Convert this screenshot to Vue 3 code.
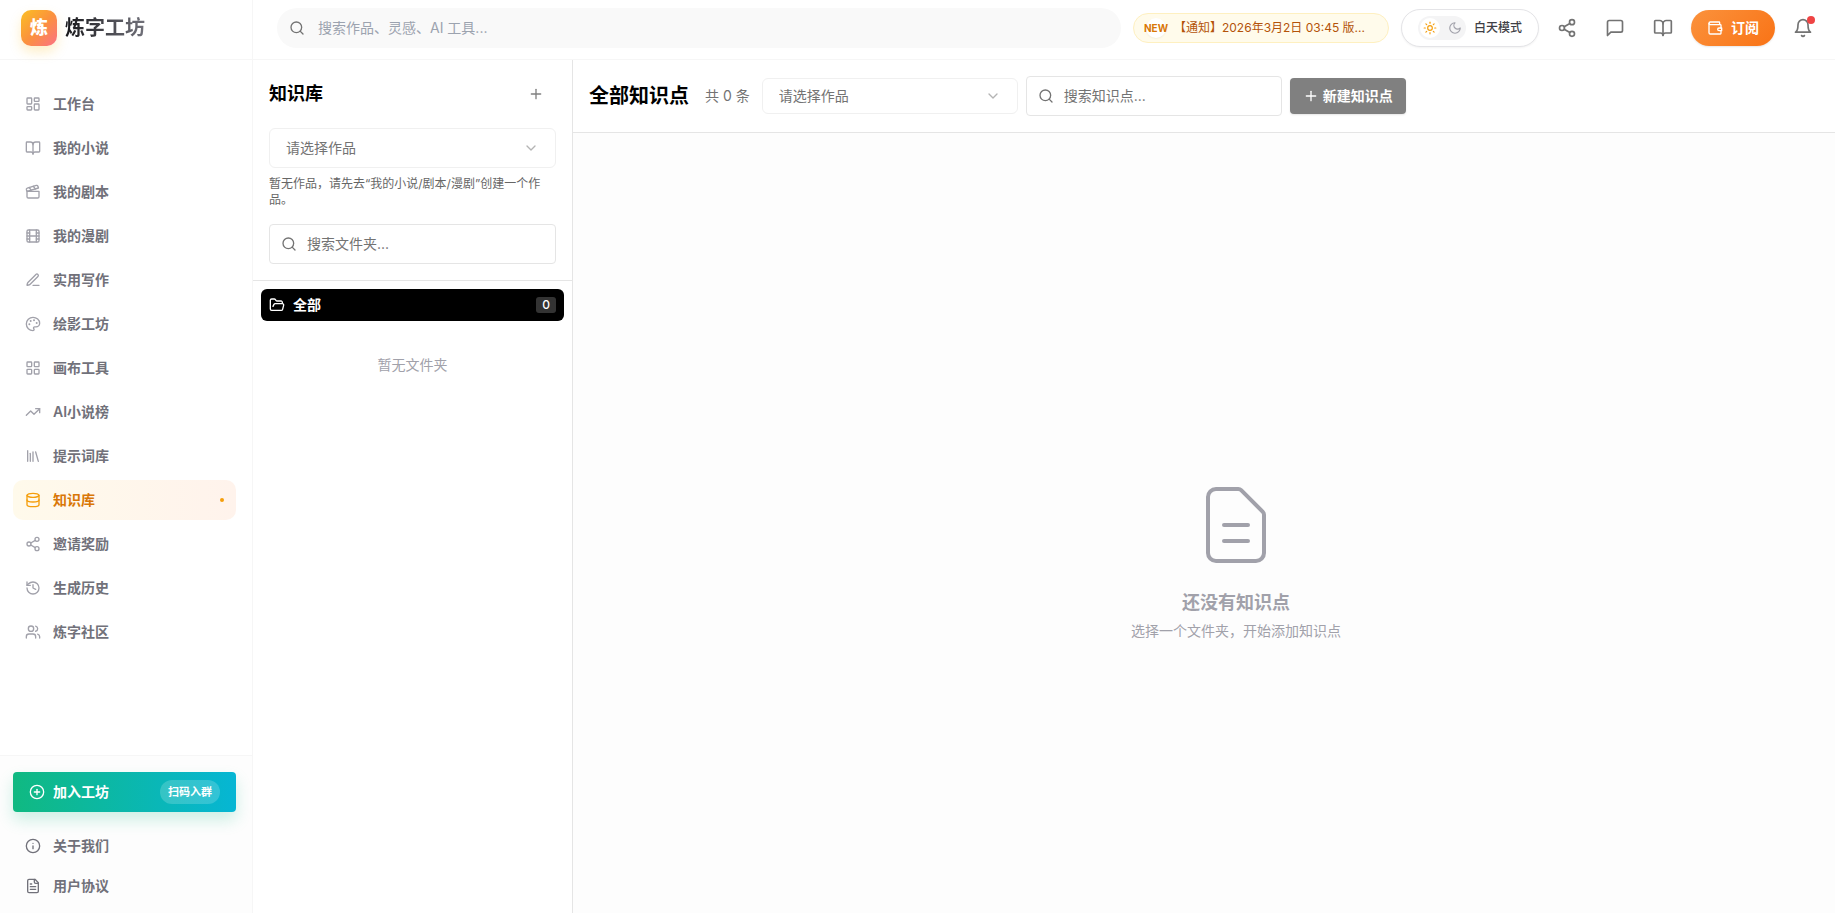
<template>
  <div class="layout">
    <aside class="sidebar">
      <a href="#" class="brand">
        <span class="brand-mark">炼</span>
        <span class="brand-name">炼字工坊</span>
      </a>
      <nav class="nav">
        <a
          v-for="item in navItems"
          :key="item.label"
          href="#"
          class="nav-item"
          :class="{ active: item.label === current }"
          @click.prevent="current = item.label"
        >
          <svg class="icon" viewBox="0 0 24 24" aria-hidden="true">
            <path v-for="d in icons[item.icon]" :key="d" :d="d" />
          </svg>
          <span>{{ item.label }}</span>
          <i v-if="item.label === current" class="nav-dot"></i>
        </a>
      </nav>
      <div class="sidebar-footer">
        <button type="button" class="join">
          <svg class="icon" viewBox="0 0 24 24" aria-hidden="true">
            <path v-for="d in icons.plusCircle" :key="d" :d="d" />
          </svg>
          <span>加入工坊</span>
          <span class="join-tag">扫码入群</span>
        </button>
        <a v-for="item in footerItems" :key="item.label" href="#" class="footer-item">
          <svg class="icon" viewBox="0 0 24 24" aria-hidden="true">
            <path v-for="d in icons[item.icon]" :key="d" :d="d" />
          </svg>
          <span>{{ item.label }}</span>
        </a>
      </div>
    </aside>

    <div class="page">
      <header class="topbar">
        <label class="global-search">
          <svg class="icon" viewBox="0 0 24 24" aria-hidden="true">
            <path v-for="d in icons.search" :key="d" :d="d" />
          </svg>
          <input v-model="keyword" type="text" placeholder="搜索作品、灵感、AI 工具..." aria-label="搜索" />
        </label>
        <a href="#" class="notice">
          <span class="notice-tag">NEW</span>
          <span class="notice-text">【通知】2026年3月2日 03:45 版...</span>
        </a>
        <button type="button" class="theme">
          <span class="theme-track">
            <span class="theme-knob">
              <svg class="icon small" viewBox="0 0 24 24" aria-hidden="true">
                <path v-for="d in icons.sun" :key="d" :d="d" />
              </svg>
            </span>
            <svg class="icon small moon" viewBox="0 0 24 24" aria-hidden="true">
              <path v-for="d in icons.moon" :key="d" :d="d" />
            </svg>
          </span>
          <span>白天模式</span>
        </button>
        <button
          v-for="action in actions"
          :key="action.icon"
          type="button"
          class="icon-button"
          :aria-label="action.label"
        >
          <svg class="icon large" viewBox="0 0 24 24" aria-hidden="true">
            <path v-for="d in icons[action.icon]" :key="d" :d="d" />
          </svg>
        </button>
        <button type="button" class="subscribe">
          <svg class="icon" viewBox="0 0 24 24" aria-hidden="true">
            <path v-for="d in icons.wallet" :key="d" :d="d" />
          </svg>
          <span>订阅</span>
        </button>
        <button type="button" class="icon-button" aria-label="消息">
          <svg class="icon large" viewBox="0 0 24 24" aria-hidden="true">
            <path v-for="d in icons.bell" :key="d" :d="d" />
          </svg>
          <i class="unread"></i>
        </button>
      </header>

      <div class="content">
        <section class="folders">
          <div class="folders-head">
            <div class="folders-title">
              <h2>知识库</h2>
              <button type="button" class="add" aria-label="新建文件夹">
                <svg class="icon" viewBox="0 0 24 24" aria-hidden="true">
                  <path v-for="d in icons.plus" :key="d" :d="d" />
                </svg>
              </button>
            </div>
            <div class="select">
              <select disabled aria-label="作品">
                <option>请选择作品</option>
              </select>
              <svg class="icon" viewBox="0 0 24 24" aria-hidden="true">
                <path v-for="d in icons.chevron" :key="d" :d="d" />
              </svg>
            </div>
            <p class="hint">暂无作品，请先去“我的小说/剧本/漫剧”创建一个作品。</p>
            <label class="search">
              <svg class="icon" viewBox="0 0 24 24" aria-hidden="true">
                <path v-for="d in icons.search" :key="d" :d="d" />
              </svg>
              <input v-model="folderKeyword" type="text" placeholder="搜索文件夹..." aria-label="搜索文件夹" />
            </label>
          </div>
          <div class="folders-list">
            <button type="button" class="folder">
              <svg class="icon" viewBox="0 0 24 24" aria-hidden="true">
                <path v-for="d in icons.folder" :key="d" :d="d" />
              </svg>
              <span>全部</span>
              <span class="folder-count">{{ total }}</span>
            </button>
            <p class="folders-empty">暂无文件夹</p>
          </div>
        </section>

        <main class="points">
          <div class="points-head">
            <h1>全部知识点</h1>
            <span class="points-total">共 {{ total }} 条</span>
            <div class="select compact">
              <select disabled aria-label="筛选作品">
                <option>请选择作品</option>
              </select>
              <svg class="icon" viewBox="0 0 24 24" aria-hidden="true">
                <path v-for="d in icons.chevron" :key="d" :d="d" />
              </svg>
            </div>
            <label class="search wide">
              <svg class="icon" viewBox="0 0 24 24" aria-hidden="true">
                <path v-for="d in icons.search" :key="d" :d="d" />
              </svg>
              <input v-model="pointKeyword" type="text" placeholder="搜索知识点..." aria-label="搜索知识点" />
            </label>
            <button type="button" class="create" disabled>
              <svg class="icon" viewBox="0 0 24 24" aria-hidden="true">
                <path v-for="d in icons.plus" :key="d" :d="d" />
              </svg>
              <span>新建知识点</span>
            </button>
          </div>
          <div class="empty">
            <svg class="empty-icon" viewBox="0 0 24 24" aria-hidden="true">
              <path v-for="d in icons.document" :key="d" :d="d" />
            </svg>
            <h3>还没有知识点</h3>
            <p>选择一个文件夹，开始添加知识点</p>
          </div>
        </main>
      </div>
    </div>
  </div>
</template>

<script setup>
import { ref } from "vue";

const current = ref("知识库");
const keyword = ref("");
const folderKeyword = ref("");
const pointKeyword = ref("");
const total = ref(0);

const navItems = [
  { label: "工作台", icon: "dashboard" },
  { label: "我的小说", icon: "book" },
  { label: "我的剧本", icon: "clapper" },
  { label: "我的漫剧", icon: "film" },
  { label: "实用写作", icon: "pen" },
  { label: "绘影工坊", icon: "palette" },
  { label: "画布工具", icon: "grid" },
  { label: "AI小说榜", icon: "trending" },
  { label: "提示词库", icon: "library" },
  { label: "知识库", icon: "database" },
  { label: "邀请奖励", icon: "share" },
  { label: "生成历史", icon: "history" },
  { label: "炼字社区", icon: "users" },
];

const footerItems = [
  { label: "关于我们", icon: "info" },
  { label: "用户协议", icon: "file" },
];

const actions = [
  { label: "分享", icon: "share" },
  { label: "反馈", icon: "message" },
  { label: "教程", icon: "book" },
];

const circle = (cx, cy, r) => `M${cx - r} ${cy}a${r} ${r} 0 1 0 ${r * 2} 0a${r} ${r} 0 1 0 ${-r * 2} 0`;

const rect = (x, y, w, h, r) =>
  `M${x + r} ${y}h${w - 2 * r}a${r} ${r} 0 0 1 ${r} ${r}v${h - 2 * r}a${r} ${r} 0 0 1 ${-r} ${r}h${2 * r - w}a${r} ${r} 0 0 1 ${-r} ${-r}v${2 * r - h}a${r} ${r} 0 0 1 ${r} ${-r}z`;

const icons = {
  dashboard: [rect(3, 3, 7, 9, 1), rect(14, 3, 7, 5, 1), rect(14, 12, 7, 9, 1), rect(3, 16, 7, 5, 1)],
  book: [
    "M12 7v14",
    "M3 18a1 1 0 0 1-1-1V4a1 1 0 0 1 1-1h5a4 4 0 0 1 4 4 4 4 0 0 1 4-4h5a1 1 0 0 1 1 1v13a1 1 0 0 1-1 1h-6a3 3 0 0 0-3 3 3 3 0 0 0-3-3z",
  ],
  clapper: [
    "M20.2 6 3 11l-.9-2.4c-.3-1.1.3-2.2 1.3-2.5l13.5-4c1.1-.3 2.2.3 2.5 1.3Z",
    "m6.2 5.3 3.1 3.9",
    "m12.4 3.4 3.1 4",
    "M3 11h18v8a2 2 0 0 1-2 2H5a2 2 0 0 1-2-2Z",
  ],
  film: [rect(3, 3, 18, 18, 2), "M7 3v18", "M3 7.5h4", "M3 12h18", "M3 16.5h4", "M17 3v18", "M17 7.5h4", "M17 16.5h4"],
  pen: ["M12 20h9", "M16.376 3.622a1 1 0 0 1 3.002 3.002L7.368 18.635a2 2 0 0 1-.855.506l-2.872.838a.5.5 0 0 1-.62-.62l.838-2.872a2 2 0 0 1 .506-.854z"],
  palette: [
    "M12 2C6.5 2 2 6.5 2 12s4.5 10 10 10c.926 0 1.648-.746 1.648-1.688 0-.437-.18-.835-.437-1.125-.29-.289-.438-.652-.438-1.125a1.64 1.64 0 0 1 1.668-1.668h1.996c3.051 0 5.555-2.503 5.555-5.554C21.965 6.012 17.461 2 12 2z",
    circle(13.5, 6.5, 0.5),
    circle(17.5, 10.5, 0.5),
    circle(8.5, 7.5, 0.5),
    circle(6.5, 12.5, 0.5),
  ],
  grid: [rect(3, 3, 7, 7, 1), rect(14, 3, 7, 7, 1), rect(14, 14, 7, 7, 1), rect(3, 14, 7, 7, 1)],
  trending: ["m22 7-8.5 8.5-5-5L2 17", "M16 7h6v6"],
  library: ["m16 6 4 14", "M12 6v14", "M8 8v12", "M4 4v16"],
  database: ["M3 5a9 3 0 1 0 18 0a9 3 0 1 0-18 0", "M3 5v14a9 3 0 0 0 18 0V5", "M3 12a9 3 0 0 0 18 0"],
  share: [circle(18, 5, 3), circle(6, 12, 3), circle(18, 19, 3), "m8.59 13.51 6.83 3.98", "m15.41 6.51-6.82 3.98"],
  history: ["M3 12a9 9 0 1 0 9-9 9.75 9.75 0 0 0-6.74 2.74L3 8", "M3 3v5h5", "M12 7v5l4 2"],
  users: ["M16 21v-2a4 4 0 0 0-4-4H6a4 4 0 0 0-4 4v2", circle(9, 7, 4), "M22 21v-2a4 4 0 0 0-3-3.87", "M16 3.13a4 4 0 0 1 0 7.75"],
  plusCircle: [circle(12, 12, 10), "M8 12h8", "M12 8v8"],
  info: [circle(12, 12, 10), "M12 16v-4", "M12 8h.01"],
  file: ["M15 2H6a2 2 0 0 0-2 2v16a2 2 0 0 0 2 2h12a2 2 0 0 0 2-2V7Z", "M14 2v4a2 2 0 0 0 2 2h4", "M10 9H8", "M16 13H8", "M16 17H8"],
  search: [circle(11, 11, 8), "m21 21-4.3-4.3"],
  sun: [
    circle(12, 12, 4),
    "M12 2v2",
    "M12 20v2",
    "m4.93 4.93 1.41 1.41",
    "m17.66 17.66 1.41 1.41",
    "M2 12h2",
    "M20 12h2",
    "m6.34 17.66-1.41 1.41",
    "m19.07 4.93-1.41 1.41",
  ],
  moon: ["M12 3a6 6 0 0 0 9 9 9 9 0 1 1-9-9Z"],
  message: ["M21 15a2 2 0 0 1-2 2H7l-4 4V5a2 2 0 0 1 2-2h14a2 2 0 0 1 2 2z"],
  wallet: [
    "M19 7V4a1 1 0 0 0-1-1H5a2 2 0 0 0 0 4h15a1 1 0 0 1 1 1v4",
    "M3 5v14a2 2 0 0 0 2 2h15a1 1 0 0 0 1-1v-4",
    "M22 12h-4a2 2 0 0 0 0 4h4z",
  ],
  bell: ["M6 8a6 6 0 0 1 12 0c0 7 3 9 3 9H3s3-2 3-9", "M10.3 21a1.94 1.94 0 0 0 3.4 0"],
  plus: ["M5 12h14", "M12 5v14"],
  chevron: ["m6 9 6 6 6-6"],
  folder: ["m6 14 1.5-2.9A2 2 0 0 1 9.24 10H20a2 2 0 0 1 1.94 2.5l-1.54 6a2 2 0 0 1-1.95 1.5H4a2 2 0 0 1-2-2V5a2 2 0 0 1 2-2h3.9a2 2 0 0 1 1.69.9l.81 1.2a2 2 0 0 0 1.67.9H18a2 2 0 0 1 2 2v2"],
  document: ["M9 12h6m-6 4h6m2 5H7a2 2 0 0 1-2-2V5a2 2 0 0 1 2-2h5.586a1 1 0 0 1 .707.293l5.414 5.414a1 1 0 0 1 .293.707V19a2 2 0 0 1-2 2z"],
};
</script>

<style>
body {
  background: #fff;
}
</style>

<style scoped>
.layout {
  display: flex;
  min-height: 100vh;
  font-family: Inter, "Noto Sans CJK SC", sans-serif;
  font-size: 14px;
  line-height: 20px;
  color: #000;
}

.layout *,
.layout *::before {
  box-sizing: border-box;
}

h1,
h2,
h3,
p {
  margin: 0;
}

a {
  color: inherit;
  text-decoration: none;
}

button,
input,
select {
  margin: 0;
  padding: 0;
  border: 0;
  background: none;
  font: inherit;
  color: inherit;
}

button {
  cursor: pointer;
}

input {
  flex: 1;
  min-width: 0;
  outline: none;
}

input::placeholder {
  color: #737373;
  opacity: 1;
}

.icon {
  flex: none;
  width: 16px;
  height: 16px;
  fill: none;
  stroke: currentColor;
  stroke-width: 2;
  stroke-linecap: round;
  stroke-linejoin: round;
}

.icon.small {
  width: 14px;
  height: 14px;
}

.icon.large {
  width: 20px;
  height: 20px;
}

/* sidebar */
.sidebar {
  display: flex;
  flex: none;
  flex-direction: column;
  width: 253px;
  border-right: 1px solid #f6f6f6;
}

.brand {
  display: flex;
  align-items: center;
  gap: 8px;
  height: 60px;
  padding: 0 21px 4px;
  border-bottom: 1px solid #f6f6f6;
}

.brand-mark {
  display: flex;
  align-items: center;
  justify-content: center;
  width: 36px;
  height: 36px;
  border-radius: 10px;
  background: linear-gradient(135deg, #fbbf24, #fb923c 50%, #fb7185);
  box-shadow: 0 6px 12px rgba(251, 191, 36, 0.25);
  color: #fff;
  font-size: 18px;
  font-weight: 900;
}

.brand-name {
  background: linear-gradient(90deg, #18181b, #71717a);
  background-clip: text;
  color: transparent;
  font-size: 20px;
  font-weight: 700;
  line-height: 28px;
}

.nav {
  display: flex;
  flex: 1;
  flex-direction: column;
  gap: 4px;
  padding: 24px 16px 24px 13px;
}

.nav-item,
.footer-item {
  display: flex;
  align-items: center;
  gap: 12px;
  height: 40px;
  padding: 0 12px;
  border-radius: 10px;
  color: #71717a;
  font-weight: 600;
}

.nav-item .icon {
  color: #a1a1aa;
}

.nav-item.active {
  background: linear-gradient(90deg, #fffaeb, #fff3ec);
  color: #d97706;
  font-weight: 700;
}

.nav-item.active .icon {
  color: #f59e0b;
}

.nav-dot {
  width: 4px;
  height: 4px;
  margin-left: auto;
  border-radius: 50%;
  background: #f59e0b;
}

.sidebar-footer {
  display: flex;
  flex-direction: column;
  gap: 4px;
  padding: 16px 16px 9px 13px;
  border-top: 1px solid #f6f6f6;
  background: #fdfdfd;
}

.footer-item {
  height: 36px;
}

.join {
  display: flex;
  align-items: center;
  gap: 8px;
  height: 40px;
  margin-bottom: 12px;
  padding: 0 16px;
  border-radius: 4px;
  background: linear-gradient(90deg, #10b981, #06b6d4);
  box-shadow: 0 8px 16px rgba(16, 185, 129, 0.2);
  color: #fff;
  font-weight: 700;
}

.join-tag {
  margin-left: auto;
  padding: 2px 8px;
  border-radius: 12px;
  background: rgba(255, 255, 255, 0.18);
  font-size: 11px;
}

/* top bar */
.page {
  display: flex;
  flex: 1;
  flex-direction: column;
  min-width: 0;
}

.topbar {
  display: flex;
  align-items: center;
  gap: 8px;
  height: 60px;
  padding: 0 12px 4px 24px;
  border-bottom: 1px solid #f6f6f6;
}

.global-search {
  display: flex;
  flex: 1;
  align-items: center;
  gap: 13px;
  height: 40px;
  margin-right: 4px;
  padding: 0 12px;
  border-radius: 20px;
  background: #f9f9f9;
  color: #737373;
}

.global-search input::placeholder {
  color: #9ca3af;
}

.notice {
  display: flex;
  align-items: center;
  gap: 8px;
  width: 256px;
  height: 30px;
  margin-right: 4px;
  padding: 0 12px;
  border: 1px solid #fef0c0;
  border-radius: 15px;
  background: #fffbeb;
  color: #b45309;
  font-size: 12px;
}

.notice-tag {
  display: flex;
  flex: none;
  align-items: center;
  justify-content: center;
  width: 20px;
  height: 20px;
  border-radius: 50%;
  background: #fff;
  box-shadow: 0 1px 2px rgba(0, 0, 0, 0.05);
  color: #d97706;
  font-size: 10px;
  font-weight: 700;
}

.notice-text {
  overflow: hidden;
  white-space: nowrap;
}

.theme {
  display: flex;
  align-items: center;
  gap: 8px;
  height: 38px;
  padding: 0 16px;
  border: 1px solid #e4e4e7;
  border-radius: 19px;
  background: #fff;
  box-shadow: 0 1px 2px rgba(0, 0, 0, 0.05);
  color: #3f3f46;
  font-size: 12px;
  font-weight: 500;
}

.theme-track {
  display: flex;
  align-items: center;
  justify-content: space-between;
  width: 48px;
  height: 24px;
  padding: 0 4px 0 2px;
  border-radius: 12px;
  background: #f4f4f5;
}

.theme-knob {
  display: flex;
  align-items: center;
  justify-content: center;
  width: 20px;
  height: 20px;
  border-radius: 50%;
  background: #fff;
  color: #f59e0b;
}

.moon {
  color: #a1a1aa;
}

.icon-button {
  position: relative;
  display: flex;
  align-items: center;
  justify-content: center;
  width: 40px;
  height: 40px;
  color: #737373;
}

.unread {
  position: absolute;
  top: 8px;
  right: 8px;
  width: 8px;
  height: 8px;
  border-radius: 50%;
  background: #ef4444;
}

.subscribe {
  display: flex;
  align-items: center;
  gap: 8px;
  height: 36px;
  padding: 0 16px;
  border-radius: 18px;
  background: linear-gradient(135deg, #fb923c, #f97316);
  box-shadow: 0 1px 2px rgba(0, 0, 0, 0.1);
  color: #fff;
  font-weight: 700;
}

/* folders */
.content {
  display: flex;
  flex: 1;
}

.folders {
  flex: none;
  width: 320px;
  border-right: 1px solid #e5e5e5;
}

.folders-head {
  padding: 16px;
  border-bottom: 1px solid #e5e5e5;
}

.folders-title {
  display: flex;
  align-items: center;
  justify-content: space-between;
  height: 36px;
  margin-bottom: 16px;
}

.folders-title h2 {
  font-size: 18px;
  font-weight: 700;
}

.add {
  display: flex;
  align-items: center;
  justify-content: center;
  width: 40px;
  height: 36px;
  color: #808080;
}

.select {
  display: grid;
  align-items: center;
  height: 40px;
  border: 1px solid #f0f0f0;
  border-radius: 6px;
  color: #737373;
}

.select select {
  grid-area: 1 / 1;
  width: 100%;
  height: 100%;
  padding: 0 40px 0 16px;
  appearance: none;
  opacity: 1;
}

.select .icon {
  grid-area: 1 / 1;
  justify-self: end;
  margin-right: 16px;
  color: #b4b4b4;
  pointer-events: none;
}

.select.compact {
  width: 256px;
  height: 36px;
  margin-left: 4px;
}

.hint {
  margin: 8px 0 16px;
  color: #666;
  font-size: 12px;
  line-height: 16px;
}

.search {
  display: flex;
  align-items: center;
  gap: 10px;
  height: 40px;
  padding: 0 11px;
  border: 1px solid #e5e5e5;
  border-radius: 4px;
  color: #737373;
}

.search.wide {
  width: 256px;
}

.folders-list {
  padding: 8px;
}

.folder {
  display: flex;
  align-items: center;
  gap: 8px;
  width: 100%;
  height: 32px;
  padding: 0 8px;
  border-radius: 6px;
  background: #000;
  color: #fff;
  font-weight: 600;
}

.folder-count {
  min-width: 20px;
  margin-left: auto;
  border-radius: 3px;
  background: #333;
  font-size: 12px;
  font-weight: 500;
  line-height: 16px;
}

.folders-empty {
  padding: 34px 0;
  color: #a1a1aa;
  text-align: center;
}

/* knowledge points */
.points {
  display: flex;
  flex: 1;
  flex-direction: column;
  min-width: 0;
  background: #fdfdfd;
}

.points-head {
  display: flex;
  align-items: center;
  gap: 8px;
  padding: 16px;
  border-bottom: 1px solid #e5e5e5;
  background: #fff;
}

.points-head h1 {
  font-size: 20px;
  font-weight: 700;
  line-height: 28px;
}

.points-total {
  margin-left: 8px;
  color: #737373;
}

.create {
  display: flex;
  align-items: center;
  gap: 4px;
  height: 36px;
  padding: 0 13px;
  border-radius: 4px;
  background: #808080;
  box-shadow: 0 1px 2px rgba(0, 0, 0, 0.1);
  color: #fff;
  font-weight: 700;
}

.empty {
  display: flex;
  flex: 1;
  flex-direction: column;
  align-items: center;
  justify-content: center;
  padding: 72px 0 0 64px;
  color: #a1a1aa;
}

.empty-icon {
  width: 96px;
  height: 96px;
  fill: none;
  stroke: currentColor;
  stroke-width: 1;
  stroke-linecap: round;
  stroke-linejoin: round;
}

.empty h3 {
  margin: 16px 0 4px;
  font-size: 18px;
  font-weight: 600;
  line-height: 28px;
}
</style>
